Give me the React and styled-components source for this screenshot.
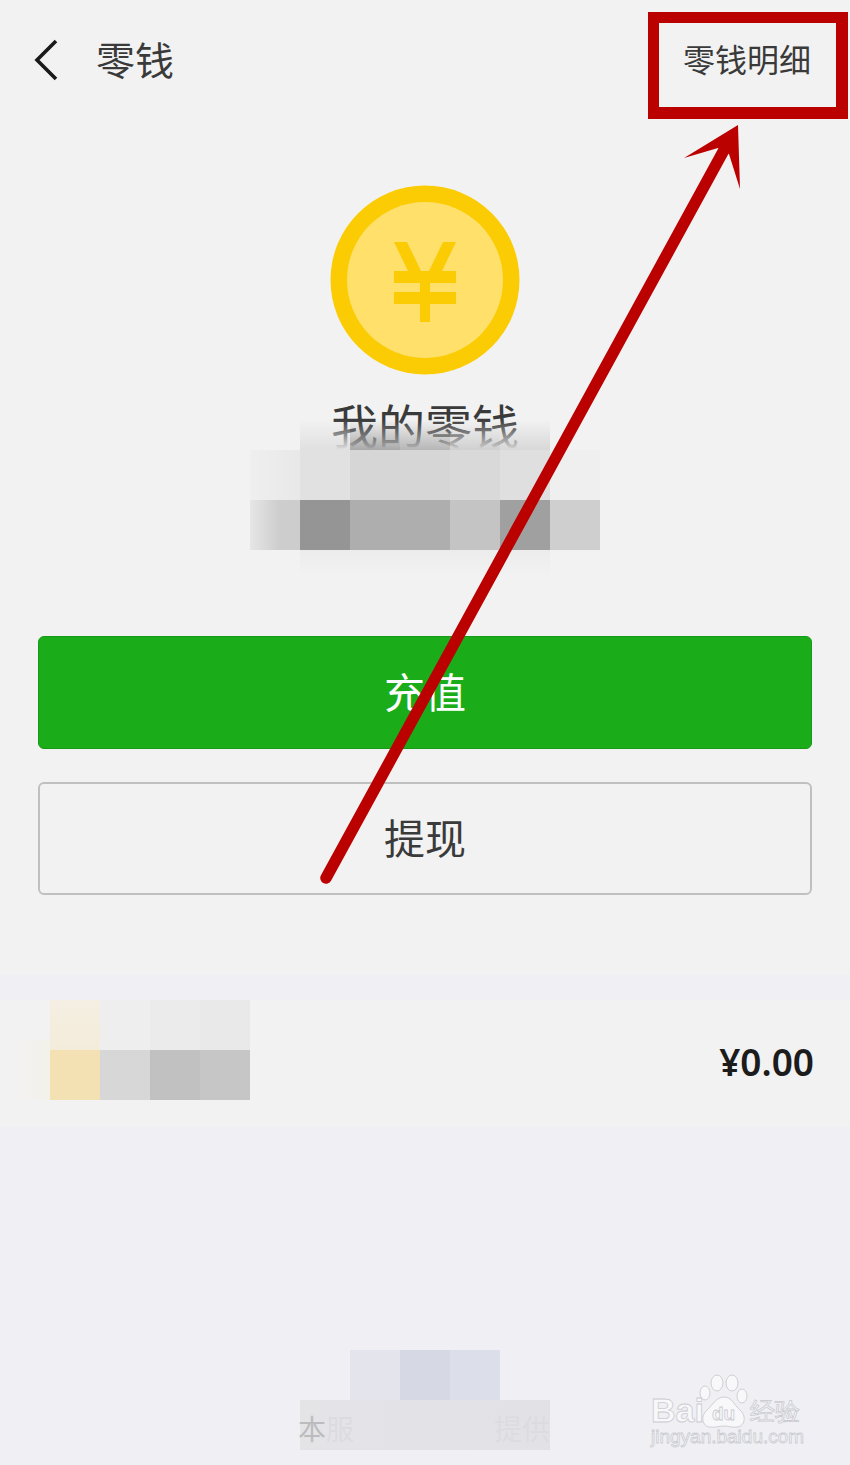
import React from "react";
import styled, { createGlobalStyle } from "styled-components";

const GlobalStyle = createGlobalStyle`
   * {
      box-sizing: border-box;
   }
   html, body {
      margin: 0;
      padding: 0;
      background: #efeff4;
   }
`;

const CJK = `"Noto Sans CJK SC", "Noto Sans", sans-serif`;

const balanceTop = [
   { bg: "linear-gradient(to right, #efefef, #e8e8e8)", w: 50 },
   { bg: "#e1e1e1", w: 50 },
   { bg: "#d6d6d6", w: 100 },
   { bg: "#d9d9d9", w: 50 },
   { bg: "#dfdfdf", w: 50 },
   { bg: "#efefef", w: 50 },
];
const balanceBottom = [
   { bg: "linear-gradient(to right, #e6e6e6, #cdcdcd 60%)", w: 50 },
   { bg: "#959595", w: 50 },
   { bg: "#aeaeae", w: 100 },
   { bg: "#c4c4c4", w: 50 },
   { bg: "#a0a0a0", w: 50 },
   { bg: "#cfcfcf", w: 50 },
];
const titleFades = ["#e0e0e0", "#a9a9a9", "#b6b6b6", "#d0d0d0", "#d8d8d8"];
const nameTop = [
   { bg: "linear-gradient(to bottom, #f4efe2, #f4ecdb)", w: 50 },
   { bg: "#eeeeee", w: 50 },
   { bg: "#ebebeb", w: 50 },
   { bg: "#e9e9e9", w: 50 },
];
const nameBottom = [
   { bg: "#f3e1b3", w: 50 },
   { bg: "#d7d7d7", w: 50 },
   { bg: "#c1c1c1", w: 50 },
   { bg: "#c6c6c6", w: 50 },
];
const footerTop = [
   { bg: "#e3e4ec", w: 50 },
   { bg: "#d6d9e4", w: 50 },
   { bg: "#dcdfe9", w: 50 },
];

function TileRow({ tiles }) {
   return (
      <Row>
         {tiles.map(({ bg, w }, i) => (
            <Tile key={i} $bg={bg} $w={w} />
         ))}
      </Row>
   );
}

function CoinIcon() {
   return (
      <svg width="190" height="190" viewBox="0 0 190 190">
         <circle cx="95" cy="95" r="94.5" fill="#fbcc04" />
         <circle cx="95" cy="95" r="78" fill="#fee06a" />
         <path
            d="M64 57H77L91 86H99L113 57H126L112 86H126V98H100V107H126V119H100V137H90V119H64V107H90V98H64V86H78Z"
            fill="#fbcc04"
         />
      </svg>
   );
}

function BaiduMark() {
   return (
      <Watermark width="156" height="76" viewBox="0 0 156 76">
         <g fill="#f8f8fa" stroke="#cfcfd4" strokeWidth="1">
            <ellipse cx="55" cy="20" rx="5" ry="7" />
            <ellipse cx="67" cy="10" rx="6" ry="8" />
            <ellipse cx="82" cy="10" rx="6" ry="8" />
            <ellipse cx="92" cy="23" rx="5" ry="7" />
            <path d="M74 24c8 0 10 8 16 13 6 5 6 15-2 17-6 1-9-1-14-1s-9 2-15 1c-8-2-8-12-2-17 6-5 9-13 17-13z" />
         </g>
         <LogoText x="1" y="49" fontSize="34" fontWeight="700">Bai</LogoText>
         <LogoText x="62" y="47" fontSize="19" fontWeight="700">du</LogoText>
         <LogoText x="100" y="47" fontSize="25" fontFamily={CJK}>经验</LogoText>
         <LogoText x="1" y="70" fontSize="19">jingyan.baidu.com</LogoText>
      </Watermark>
   );
}

export default function App() {
   return (
      <Page>
         <GlobalStyle />
         <Header>
            <HeaderLeft>
               <svg width="24" height="42" viewBox="0 0 24 42">
                  <path d="M22 2 3 21l19 19" fill="none" stroke="#1a1a1a" strokeWidth="3.6" />
               </svg>
               <PageTitle>零钱</PageTitle>
            </HeaderLeft>
            <DetailLink>零钱明细</DetailLink>
         </Header>

         <Hero>
            <CoinIcon />
            <BalanceTitle>
               <TitleText>我的零钱</TitleText>
               <TitleSmear>
                  {titleFades.map((c) => (
                     <Fade key={c} $c={c} />
                  ))}
               </TitleSmear>
            </BalanceTitle>
            <Mosaic>
               <TileRow tiles={balanceTop} />
               <TileRow tiles={balanceBottom} />
               <BalanceShadow />
            </Mosaic>
         </Hero>

         <Actions>
            <PrimaryButton>充值</PrimaryButton>
            <OutlineButton>提现</OutlineButton>
         </Actions>

         <Divider />

         <AccountRow>
            <AccountGlow />
            <Mosaic>
               <TileRow tiles={nameTop} />
               <TileRow tiles={nameBottom} />
            </Mosaic>
            <Amount>¥0.00</Amount>
         </AccountRow>

         <Footer>
            <TileRow tiles={footerTop} />
            <FooterNote>
               <NoteStrong>本</NoteStrong>
               <NoteFaint>服</NoteFaint>
               <NoteSpacer />
               <NoteFaint>提供</NoteFaint>
            </FooterNote>
         </Footer>

         <BaiduMark />

         <HighlightBox />
         <ArrowLayer width="850" height="1465" viewBox="0 0 850 1465">
            <path d="M326 878 724 150" stroke="#bb0000" strokeWidth="11.5" strokeLinecap="round" fill="none" />
            <path d="M738 125 684 158 718 148 729 154 740 189z" fill="#bb0000" />
         </ArrowLayer>
      </Page>
   );
}

const Page = styled.div`
   position: relative;
   width: 850px;
   height: 1465px;
   overflow: hidden;
   display: flex;
   flex-direction: column;
   background-color: #f2f2f2;
   font-family: ${CJK};
   color: #3a3a3a;
`;

const Header = styled.header`
   height: 120px;
   flex-shrink: 0;
   display: flex;
   align-items: center;
   justify-content: space-between;
   padding: 0 39px 0 34px;
`;

const HeaderLeft = styled.div`
   display: flex;
   align-items: center;
   gap: 38px;
`;

const PageTitle = styled.h1`
   margin: 0 0 5px;
   font-size: 39px;
   line-height: 50px;
   font-weight: 400;
`;

const DetailLink = styled.span`
   margin-bottom: 5px;
   font-size: 32px;
   line-height: 40px;
`;

const Hero = styled.section`
   display: flex;
   flex-direction: column;
   align-items: center;
   padding-top: 65px;
`;

const BalanceTitle = styled.h2`
   position: relative;
   width: 250px;
   height: 50px;
   margin: 25px 0 0;
   font-weight: 400;
   text-align: center;
   white-space: nowrap;
`;

const TitleText = styled.span`
   display: block;
   margin-top: -1px;
   font-size: 47px;
   line-height: 50px;
`;

const TitleSmear = styled.div`
   position: absolute;
   left: 0;
   bottom: 0;
   width: 250px;
   height: 34px;
   display: flex;
   overflow: hidden;
`;

const Fade = styled.div`
   flex: 1;
   background: linear-gradient(to bottom, rgba(242, 242, 242, 0) 10%, ${(p) => p.$c});
`;

const Mosaic = styled.div`
   position: relative;
   display: flex;
   flex-direction: column;
`;

const Row = styled.div`
   display: flex;
`;

const Tile = styled.div`
   width: ${(p) => p.$w}px;
   height: 50px;
   background: ${(p) => p.$bg};
`;

const BalanceShadow = styled.div`
   position: absolute;
   top: 100%;
   left: 50px;
   width: 250px;
   height: 26px;
   background: linear-gradient(to bottom, #ececec, rgba(242, 242, 242, 0));
`;

const Actions = styled.div`
   display: flex;
   flex-direction: column;
   gap: 33px;
   margin-top: 86px;
   padding: 0 38px;
`;

const PrimaryButton = styled.button`
   height: 113px;
   padding: 0 0 5px;
   border: 1px solid #179b16;
   border-radius: 6px;
   background-color: #1aad19;
   color: #ffffff;
   font-family: inherit;
   font-size: 41px;
`;

const OutlineButton = styled(PrimaryButton)`
   border: 2px solid #c0c0c0;
   background-color: #f2f2f2;
   color: #3a3a3a;
`;

const Divider = styled.div`
   height: 25px;
   flex-shrink: 0;
   margin-top: 80px;
   background-color: #efeff4;
`;

const AccountRow = styled.div`
   position: relative;
   height: 127px;
   flex-shrink: 0;
   display: flex;
   align-items: flex-start;
   justify-content: space-between;
   padding: 0 36px 0 50px;
`;

const AccountGlow = styled.div`
   position: absolute;
   left: 15px;
   top: 40px;
   width: 35px;
   height: 60px;
   background: linear-gradient(to right, rgba(244, 241, 234, 0), #f4f1ea);
`;

const Amount = styled.span`
   margin-top: 37px;
   font-family: "Noto Sans", sans-serif;
   font-size: 37px;
   line-height: 50px;
   font-weight: 600;
   color: #1c1c1c;
`;

const Footer = styled.footer`
   position: relative;
   flex: 1;
   display: flex;
   flex-direction: column;
   align-items: center;
   padding-top: 223px;
   background-color: #efeff4;
`;

const FooterNote = styled.div`
   width: 250px;
   height: 50px;
   display: flex;
   align-items: center;
   padding-top: 6px;
   font-size: 28px;
   line-height: 40px;
   background: linear-gradient(to right, #e4e4e7, #e4e4e8 20%, #e2e2e6);
`;

const NoteStrong = styled.span`
   margin-left: -2px;
   color: #bcbcbe;
`;

const NoteFaint = styled.span`
   color: #dcdce0;
`;

const NoteSpacer = styled.span`
   flex: 1;
`;

const Watermark = styled.svg`
   position: absolute;
   left: 650px;
   top: 1373px;
`;

const LogoText = styled.text`
   font-family: "Liberation Sans", sans-serif;
   fill: #f8f8fa;
   stroke: #cbcbd0;
   stroke-width: 0.8px;
`;

const HighlightBox = styled.div`
   position: absolute;
   left: 648px;
   top: 12px;
   width: 200px;
   height: 107px;
   border-style: solid;
   border-color: #bb0000;
   border-width: 11px 12px 12px 11px;
`;

const ArrowLayer = styled.svg`
   position: absolute;
   left: 0;
   top: 0;
   pointer-events: none;
`;
